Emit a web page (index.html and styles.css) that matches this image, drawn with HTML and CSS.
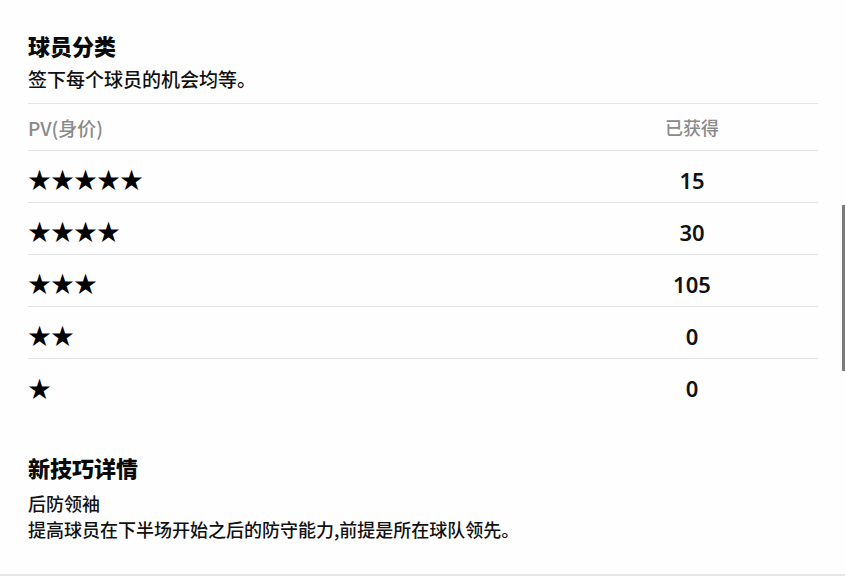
FILE: index.html
```html
<!DOCTYPE html>
<html lang="zh-CN">
<head>
<meta charset="utf-8">
<link rel="stylesheet" href="styles.css">
</head>
<body>
<div class="page">
  <section class="card">
    <h2 class="title">球员分类</h2>
    <p class="subtitle">签下每个球员的机会均等。</p>
    <div class="table">
      <div class="row head">
        <span class="col-pv">PV(身价)</span>
        <span class="col-num">已获得</span>
      </div>
      <div class="row">
        <span class="col-pv stars">★★★★★</span>
        <span class="col-num num">15</span>
      </div>
      <div class="row">
        <span class="col-pv stars">★★★★</span>
        <span class="col-num num">30</span>
      </div>
      <div class="row">
        <span class="col-pv stars">★★★</span>
        <span class="col-num num">105</span>
      </div>
      <div class="row">
        <span class="col-pv stars">★★</span>
        <span class="col-num num">0</span>
      </div>
      <div class="row last">
        <span class="col-pv stars">★</span>
        <span class="col-num num">0</span>
      </div>
    </div>
    <h2 class="title title2">新技巧详情</h2>
    <p class="skill-name">后防领袖</p>
    <p class="skill-desc">提高球员在下半场开始之后的防守能力,前提是所在球队领先。</p>
  </section>
  <div class="scroll-thumb"></div>
</div>
</body>
</html>
```

FILE: styles.css
```css
html, body {
  margin: 0;
  padding: 0;
  background: #e6e6e6;
}
body {
  font-family: "Noto Sans CJK SC", "Noto Sans", sans-serif;
  color: #111;
}
.page {
  position: relative;
  width: 845px;
  height: 576px;
  overflow: hidden;
}
.card {
  background: #fefefe;
  height: 574px;
  box-sizing: border-box;
  padding: 31px 27px 0 28px;
}
.title {
  margin: 0;
  font-size: 22px;
  line-height: 28px;
  font-weight: 900;
  color: #0a0a0a;
}
.subtitle {
  margin: 7px 0 0;
  font-size: 19px;
  line-height: 26px;
  font-weight: 500;
  color: #111;
}
.table {
  margin-top: 11px;
  border-top: 1px solid #e4e4e4;
}
.row {
  display: flex;
  align-items: center;
  border-bottom: 1px solid #e4e4e4;
  padding-top: 3px;
  box-sizing: border-box;
  height: 52px;
}
.row.head {
  height: 47px;
  padding-top: 0;
  color: #8a8a8a;
  font-size: 19px;
  font-weight: 500;
}
.row.last {
  border-bottom: none;
}
.col-pv {
  flex: 1;
}
.col-num {
  width: 252px;
  text-align: center;
}
.head .col-num {
  font-size: 18px;
}
.stars {
  font-family: "Noto Sans CJK SC", sans-serif;
  font-size: 23px;
  line-height: 30px;
  color: #000;
}
.num {
  font-family: "Noto Sans", sans-serif;
  font-weight: 600;
  font-size: 22px;
  padding-top: 3px;
  color: #111;
}
.title2 {
  margin-top: 42px;
}
.skill-name {
  margin: 9px 0 0;
  font-size: 18px;
  line-height: 26px;
  font-weight: 500;
}
.skill-desc {
  margin: 0;
  font-size: 18px;
  line-height: 26px;
  font-weight: 500;
}
.scroll-thumb {
  position: absolute;
  right: 0;
  top: 205px;
  width: 3px;
  height: 166px;
  background: #7a7a7a;
}
```
